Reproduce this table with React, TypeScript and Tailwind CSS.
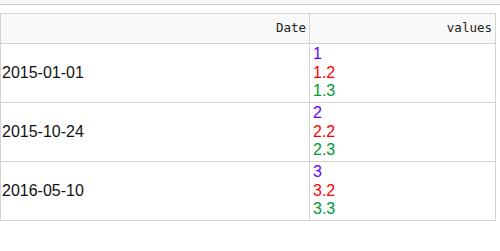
import React from "react";

const rows = [
  { date: "2015-01-01", v: ["1", "1.2", "1.3"] },
  { date: "2015-10-24", v: ["2", "2.2", "2.3"] },
  { date: "2016-05-10", v: ["3", "3.2", "3.3"] },
];

export default function App() {
  return (
    <div className="w-[500px] h-[251px] bg-white overflow-hidden">
      <div className="h-[5px] bg-[#f7f7f7] border-b border-[#cccccc]" />
      <div className="pt-[8px]">
        <div className="grid grid-cols-[309px_186px] w-[496px] border-l border-t border-[#d3d3d3]">
          <div className="h-[30px] border-r border-b border-[#d3d3d3] bg-[#f9f9f9] flex items-center justify-end pr-[3px] text-[12.5px] text-[#222] font-['DejaVu_Sans_Mono',monospace]">
            Date
          </div>
          <div className="h-[30px] border-r border-b border-[#d3d3d3] bg-[#f9f9f9] flex items-center justify-end pr-[3px] text-[12.5px] text-[#222] font-['DejaVu_Sans_Mono',monospace]">
            values
          </div>
          {rows.map((r) => (
            <React.Fragment key={r.date}>
              <div className="h-[59px] border-r border-b border-[#d3d3d3] flex items-center pl-[1px] text-[16px] leading-[1.15] text-[#111] font-['Liberation_Sans',Arial,sans-serif]">
                {r.date}
              </div>
              <div className="h-[59px] border-r border-b border-[#d3d3d3] flex flex-col justify-center pl-[3px] text-[16px] leading-[1.15] font-['Liberation_Sans',Arial,sans-serif]">
                <span className="text-[#6600ff]">{r.v[0]}</span>
                <span className="text-[#ff0000]">{r.v[1]}</span>
                <span className="text-[#009933]">{r.v[2]}</span>
              </div>
            </React.Fragment>
          ))}
        </div>
      </div>
    </div>
  );
}
